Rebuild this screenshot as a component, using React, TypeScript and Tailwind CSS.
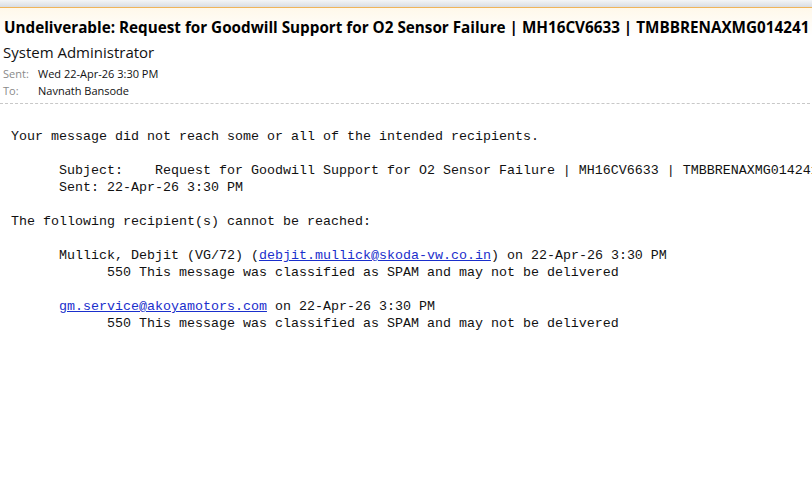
const body = [
  "Your message did not reach some or all of the intended recipients.",
  "",
  "      Subject:    Request for Goodwill Support for O2 Sensor Failure | MH16CV6633 | TMBBRENAXMG014241",
  "      Sent: 22-Apr-26 3:30 PM",
  "",
  "The following recipient(s) cannot be reached:",
  "",
];

function Link({ children }: { children: string }) {
  return <span className="text-[#1a2fcc] underline">{children}</span>;
}

export default function App() {
  return (
    <div className="w-[812px] h-[487px] overflow-hidden bg-white">
      {/* window chrome strip */}
      <div className="h-[7px] bg-gradient-to-b from-[#f4f5f7] to-[#d9dde3]" />
      <div className="h-px bg-[#f0b45a]" />
      <div className="bg-gradient-to-b from-[#fff8ea] to-white">
        <div
          className="h-[28px] pt-[9px] pl-[4px] whitespace-nowrap overflow-hidden text-[15.25px] leading-[21px] font-bold text-black"
          style={{ fontFamily: '"Open Sans", sans-serif' }}
        >
          Undeliverable: Request for Goodwill Support for O2 Sensor Failure | MH16CV6633 | TMBBRENAXMG014241
        </div>
      </div>
      <div style={{ fontFamily: '"Open Sans", sans-serif' }}>
        <div className="pl-[3px] h-[29px] pt-[4px] text-[15px] leading-[24px] text-[#111]">System Administrator</div>
        <div className="flex h-[17px] text-[11px] leading-[17px]">
          <span className="w-[38px] pl-[3px] text-[#8a8a8a]">Sent:</span>
          <span className="text-[#111]">Wed 22-Apr-26 3:30 PM</span>
        </div>
        <div className="flex h-[17px] text-[11px] leading-[17px]">
          <span className="w-[38px] pl-[3px] text-[#8a8a8a]">To:</span>
          <span className="text-[#111]">Navnath Bansode</span>
        </div>
      </div>
      <div className="mt-[4px] mr-[2px] border-t border-dashed border-[#c8c8c8]" />
      <div
        className="pt-[24px] pl-[11px] whitespace-pre text-[13.33px] leading-[17px] text-[#111]"
        style={{ fontFamily: '"Liberation Mono", monospace' }}
      >
        {body.map((l, i) => (
          <div key={i} className="h-[17px]">{l}</div>
        ))}
        <div className="h-[17px]">
          {"      Mullick, Debjit (VG/72) ("}
          <Link>debjit.mullick@skoda-vw.co.in</Link>
          {") on 22-Apr-26 3:30 PM"}
        </div>
        <div className="h-[17px]">{"            550 This message was classified as SPAM and may not be delivered"}</div>
        <div className="h-[17px]" />
        <div className="h-[17px]">
          {"      "}
          <Link>gm.service@akoyamotors.com</Link>
          {" on 22-Apr-26 3:30 PM"}
        </div>
        <div className="h-[17px]">{"            550 This message was classified as SPAM and may not be delivered"}</div>
      </div>
    </div>
  );
}
